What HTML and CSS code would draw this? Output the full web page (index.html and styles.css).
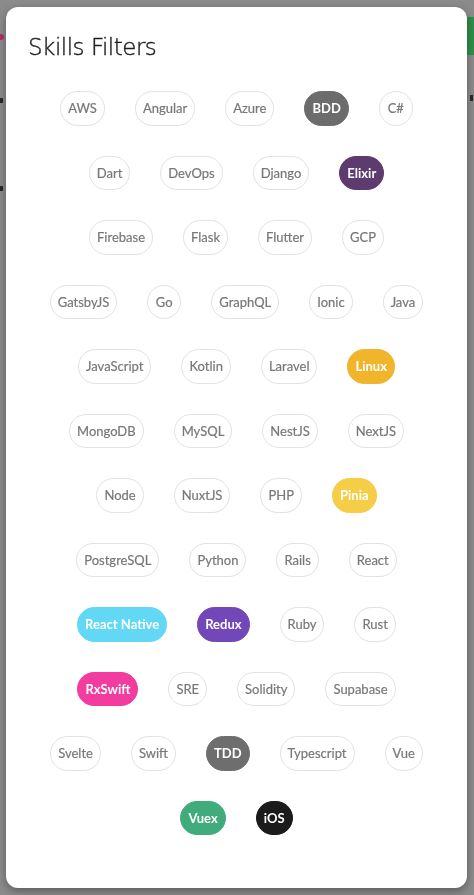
FILE: index.html
```html
<!DOCTYPE html>
<html lang="en">
<head>
<meta charset="utf-8">
<title>Skills Filters</title>
<link rel="stylesheet" href="styles.css">
</head>
<body>
<div class="page">
  <span class="bg-dot"></span>
  <span class="bg-btn"></span>
  <span class="bg-mark bg-mark-1"></span>
  <span class="bg-mark bg-mark-2"></span>
  <span class="bg-mark bg-mark-3"></span>
</div>
<div class="overlay">
  <div class="modal">
    <h2 class="title">Skills Filters</h2>
    <div class="chips">
      <span class="chip">AWS</span>
      <span class="chip">Angular</span>
      <span class="chip">Azure</span>
      <span class="chip chip-bdd">BDD</span>
      <span class="chip">C#</span>
      <span class="chip">Dart</span>
      <span class="chip">DevOps</span>
      <span class="chip">Django</span>
      <span class="chip chip-elixir">Elixir</span>
      <span class="chip">Firebase</span>
      <span class="chip">Flask</span>
      <span class="chip">Flutter</span>
      <span class="chip">GCP</span>
      <span class="chip">GatsbyJS</span>
      <span class="chip">Go</span>
      <span class="chip">GraphQL</span>
      <span class="chip">Ionic</span>
      <span class="chip">Java</span>
      <span class="chip">JavaScript</span>
      <span class="chip">Kotlin</span>
      <span class="chip">Laravel</span>
      <span class="chip chip-linux">Linux</span>
      <span class="chip">MongoDB</span>
      <span class="chip">MySQL</span>
      <span class="chip">NestJS</span>
      <span class="chip">NextJS</span>
      <span class="chip">Node</span>
      <span class="chip">NuxtJS</span>
      <span class="chip">PHP</span>
      <span class="chip chip-pinia">Pinia</span>
      <span class="chip">PostgreSQL</span>
      <span class="chip">Python</span>
      <span class="chip">Rails</span>
      <span class="chip">React</span>
      <span class="chip chip-rn">React Native</span>
      <span class="chip chip-redux">Redux</span>
      <span class="chip">Ruby</span>
      <span class="chip">Rust</span>
      <span class="chip chip-rxswift">RxSwift</span>
      <span class="chip">SRE</span>
      <span class="chip">Solidity</span>
      <span class="chip">Supabase</span>
      <span class="chip">Svelte</span>
      <span class="chip">Swift</span>
      <span class="chip chip-tdd">TDD</span>
      <span class="chip">Typescript</span>
      <span class="chip">Vue</span>
      <span class="chip chip-vuex">Vuex</span>
      <span class="chip chip-ios">iOS</span>
    </div>
  </div>
</div>
</body>
</html>
```

FILE: styles.css
```css
* { box-sizing: border-box; }

html, body {
  margin: 0;
  padding: 0;
  height: 100%;
}

body {
  background: #8b8b8b;
  font-family: "Lato", "Noto Sans", sans-serif;
  overflow: hidden;
}

.page {
  position: absolute;
  inset: 0;
}

.bg-dot {
  position: absolute;
  left: 0;
  top: 34px;
  width: 4px;
  height: 6px;
  border-radius: 0 3px 3px 0;
  background: #b0306a;
}

.bg-btn {
  position: absolute;
  right: 0;
  top: 17px;
  width: 8px;
  height: 38px;
  background: #2f8f4c;
}

.bg-mark {
  position: absolute;
  width: 3px;
  height: 5px;
  background: #2a2a2a;
}
.bg-mark-1 { left: 0; top: 98px; }
.bg-mark-2 { left: 0; top: 186px; }
.bg-mark-3 { right: 1px; top: 95px; height: 6px; }

.overlay {
  position: fixed;
  inset: 0;
  padding: 7px 7px 7px 6px;
}

.modal {
  height: 881px;
  background: #ffffff;
  border-radius: 12px;
  box-shadow: 0 3px 8px rgba(0, 0, 0, 0.35);
  padding: 24px 0 0;
}

.title {
  margin: 0 0 0 22px;
  font-family: "DejaVu Sans", sans-serif;
  font-weight: 200;
  font-size: 23px;
  line-height: 32px;
  color: #1f1f1f;
  letter-spacing: -0.5px;
  -webkit-text-stroke: 0.4px #1f1f1f;
}

.chips {
  width: 416px;
  margin: 13px auto 0;
  display: flex;
  flex-wrap: wrap;
  justify-content: center;
}

.chip {
  margin: 15px;
  padding: 8px 7px;
  min-width: 34px;
  text-align: center;
  border: 1px solid #e2e2e2;
  border-radius: 18px;
  font-size: 13px;
  line-height: 16.5px;
  color: #787878;
  white-space: nowrap;
  -webkit-text-stroke: 0.2px #787878;
}

.chip-bdd, .chip-elixir, .chip-linux, .chip-pinia, .chip-rn,
.chip-redux, .chip-rxswift, .chip-tdd, .chip-vuex, .chip-ios {
  color: #ffffff;
  font-weight: 700;
  -webkit-text-stroke: 0;
}

.chip-bdd { background: #6c6c6c; border-color: #6c6c6c; }
.chip-elixir { background: #5d3b6f; border-color: #5d3b6f; }
.chip-linux { background: #f0b52b; border-color: #f0b52b; }
.chip-pinia { background: #f6cd47; border-color: #f6cd47; }
.chip-rn { background: #62d8f5; border-color: #62d8f5; }
.chip-redux { background: #7247b8; border-color: #7247b8; }
.chip-rxswift { background: #f23c9f; border-color: #f23c9f; }
.chip-tdd { background: #6e6e6e; border-color: #6e6e6e; }
.chip-vuex { background: #40ac7c; border-color: #40ac7c; }
.chip-ios { background: #1b1b1b; border-color: #1b1b1b; }
```
